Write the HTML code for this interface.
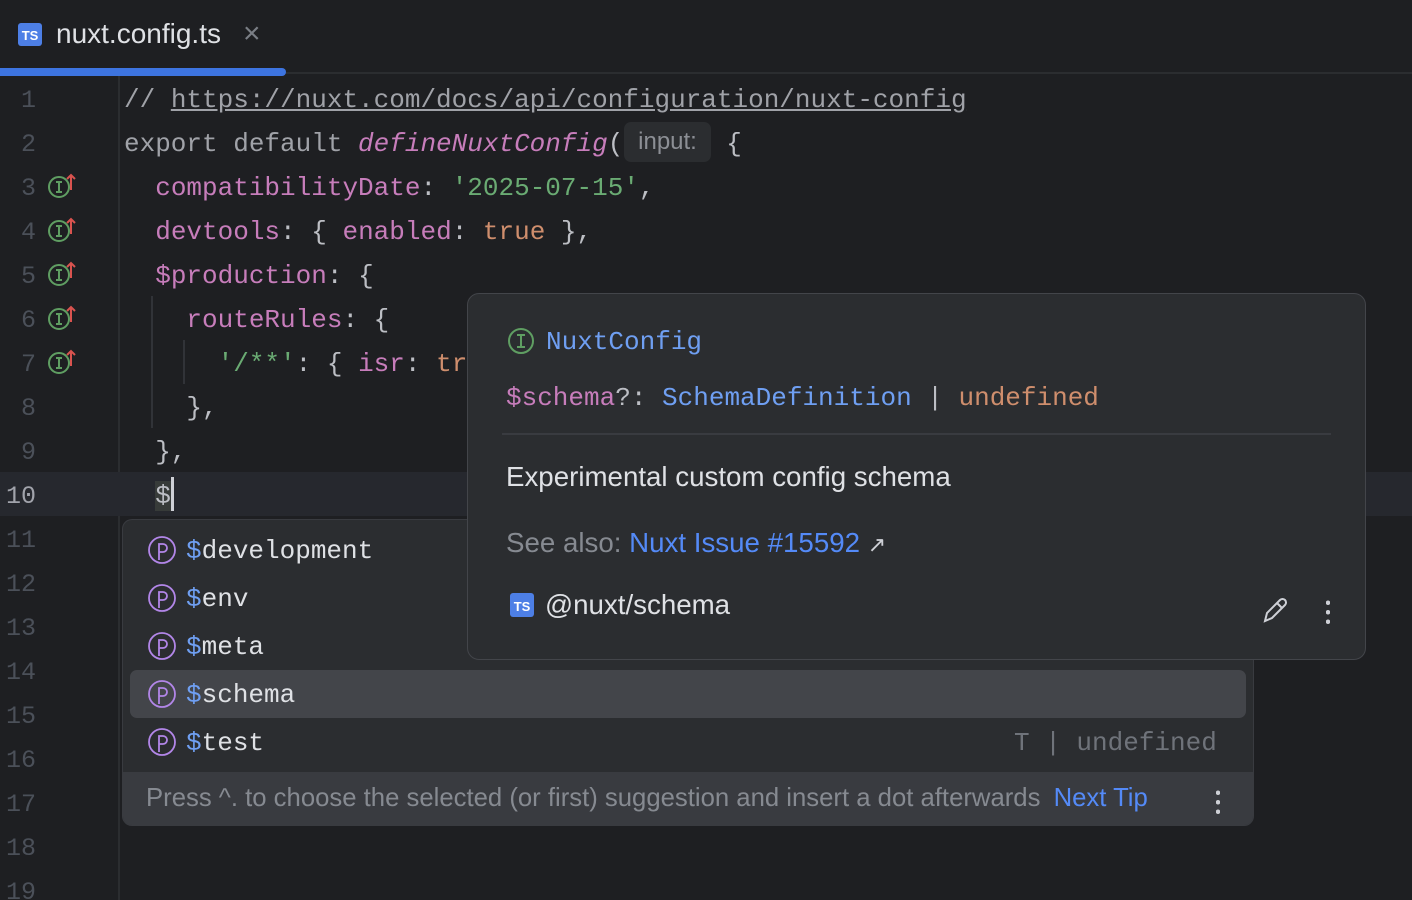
<!DOCTYPE html>
<html><head><meta charset="utf-8"><style>
*{margin:0;padding:0;box-sizing:border-box}
html,body{width:1412px;height:900px;overflow:hidden}
body{background:#1e1f22;position:relative;font-family:"Liberation Sans",sans-serif;color:#bcbec4}
.ln{position:absolute;left:0;width:36px;text-align:right;color:#4b5059;font-family:"Liberation Mono",monospace;font-size:25px;line-height:44px}
.code{position:absolute;left:124px;line-height:44px;white-space:pre;font-family:"Liberation Mono",monospace;font-size:26px;color:#bcbec4}
.p{color:#c77dbb}.s{color:#6aab73}.o{color:#cf8e6d}.k{color:#a0a2a8}.b{color:#6f9ff2}
</style></head><body>
<div style="position:absolute;left:0;top:0;width:1412px;height:74px;background:#1e1f22;border-bottom:2px solid #2b2d30"></div>
<div style="position:absolute;left:18px;top:23px;width:24px;height:23px;background:#4d7fe6;border-radius:3px;color:#fff;font-size:13px;font-weight:bold;text-align:center;line-height:25px">TS</div>
<div style="position:absolute;left:56px;top:18px;font-size:28px;color:#dfe1e5">nuxt.config.ts</div>
<div style="position:absolute;left:243px;top:17px;font-size:30px;color:#7a7e85">×</div>
<div style="position:absolute;left:0;top:68px;width:286px;height:8px;background:#3d74e0;border-radius:0 4px 4px 0"></div>
<div style="position:absolute;left:118px;top:76px;width:2px;height:824px;background:#2b2d30"></div>
<div style="position:absolute;left:0;top:472px;width:1412px;height:44px;background:#26282e"></div>

<div class="ln" style="top:79px">1</div>
<div class="ln" style="top:123px">2</div>
<div class="ln" style="top:167px">3</div>
<div class="ln" style="top:211px">4</div>
<div class="ln" style="top:255px">5</div>
<div class="ln" style="top:299px">6</div>
<div class="ln" style="top:343px">7</div>
<div class="ln" style="top:387px">8</div>
<div class="ln" style="top:431px">9</div>
<div class="ln" style="top:475px;color:#a1a3ab">10</div>
<div class="ln" style="top:519px">11</div>
<div class="ln" style="top:563px">12</div>
<div class="ln" style="top:607px">13</div>
<div class="ln" style="top:651px">14</div>
<div class="ln" style="top:695px">15</div>
<div class="ln" style="top:739px">16</div>
<div class="ln" style="top:783px">17</div>
<div class="ln" style="top:827px">18</div>
<div class="ln" style="top:871px">19</div>

<svg style="position:absolute;left:0;top:0" width="100" height="400">
<g fill="none" stroke-width="2">
<g><circle cx="59" cy="187" r="10" stroke="#5f9e62"/><path d="M56 182h6M59 182v10M56 192h6" stroke="#5f9e62"/><path d="M71 190v-15M67 179l4-4 4 4" stroke="#d9534f"/></g>
<g transform="translate(0,44)"><circle cx="59" cy="187" r="10" stroke="#5f9e62"/><path d="M56 182h6M59 182v10M56 192h6" stroke="#5f9e62"/><path d="M71 190v-15M67 179l4-4 4 4" stroke="#d9534f"/></g>
<g transform="translate(0,88)"><circle cx="59" cy="187" r="10" stroke="#5f9e62"/><path d="M56 182h6M59 182v10M56 192h6" stroke="#5f9e62"/><path d="M71 190v-15M67 179l4-4 4 4" stroke="#d9534f"/></g>
<g transform="translate(0,132)"><circle cx="59" cy="187" r="10" stroke="#5f9e62"/><path d="M56 182h6M59 182v10M56 192h6" stroke="#5f9e62"/><path d="M71 190v-15M67 179l4-4 4 4" stroke="#d9534f"/></g>
<g transform="translate(0,176)"><circle cx="59" cy="187" r="10" stroke="#5f9e62"/><path d="M56 182h6M59 182v10M56 192h6" stroke="#5f9e62"/><path d="M71 190v-15M67 179l4-4 4 4" stroke="#d9534f"/></g>
</g></svg>

<div style="position:absolute;left:151px;top:296px;width:2px;height:132px;background:#313338"></div>
<div style="position:absolute;left:183px;top:340px;width:2px;height:44px;background:#313338"></div>

<div class="code" style="top:78px"><span class="k">// </span><span class="k" style="text-decoration:underline">https://nuxt.com/docs/api/configuration/nuxt-config</span></div>
<div class="code" style="top:122px"><span class="k">export default </span><span class="p" style="font-style:italic">defineNuxtConfig</span>(<span style="display:inline-block;width:103px"></span>{</div>
<div style="position:absolute;left:624px;top:122px;width:87px;height:40px;background:#2b2d30;border-radius:7px;color:#8c8f95;font-size:24px;line-height:40px;text-align:center">input:</div>
<div class="code" style="top:166px">  <span class="p">compatibilityDate</span>: <span class="s">'2025-07-15'</span>,</div>
<div class="code" style="top:210px">  <span class="p">devtools</span>: { <span class="p">enabled</span>: <span class="o">true</span> },</div>
<div class="code" style="top:254px">  <span class="p">$production</span>: {</div>
<div class="code" style="top:298px">    <span class="p">routeRules</span>: {</div>
<div class="code" style="top:342px">      <span class="s">'/**'</span>: { <span class="p">isr</span>: <span class="o">true</span> },</div>
<div class="code" style="top:386px">    },</div>
<div class="code" style="top:430px">  },</div>
<div class="code" style="top:474px">  <span style="background:#373b39">$</span></div>
<div style="position:absolute;left:171px;top:477px;width:3px;height:34px;background:#ced0d6"></div>

<div style="position:absolute;left:122px;top:519px;width:1132px;height:307px;background:#2b2d30;border:1px solid #393b40;border-radius:10px;overflow:hidden">
  <div style="position:absolute;left:7px;top:150px;width:1116px;height:48px;background:#43454a;border-radius:7px"></div>
  <div style="position:absolute;left:0;top:252px;width:1132px;height:56px;background:#393b40"></div>
  <div style="position:absolute;left:23px;top:264px;font-size:25.7px;color:#868a91;white-space:nowrap">Press ^. to choose the selected (or first) suggestion and insert a dot afterwards <span style="color:#548af7;margin-left:6px">Next Tip</span></div>
  <div style="position:absolute;left:1093px;top:268px;width:4px;height:26px;background:radial-gradient(circle,#ced0d6 2px,transparent 2.5px) 0 0/4px 9.5px repeat-y"></div>
</div>
<svg style="position:absolute;left:0;top:0" width="200" height="800" fill="none" stroke="#b286e8" stroke-width="1.8">
<g><circle cx="162" cy="550" r="13"/><path d="M159 560v-16h4a4 4 0 0 1 0 8h-4"/></g>
<g transform="translate(0,48)"><circle cx="162" cy="550" r="13"/><path d="M159 560v-16h4a4 4 0 0 1 0 8h-4"/></g>
<g transform="translate(0,96)"><circle cx="162" cy="550" r="13"/><path d="M159 560v-16h4a4 4 0 0 1 0 8h-4"/></g>
<g transform="translate(0,144)"><circle cx="162" cy="550" r="13"/><path d="M159 560v-16h4a4 4 0 0 1 0 8h-4"/></g>
<g transform="translate(0,192)"><circle cx="162" cy="550" r="13"/><path d="M159 560v-16h4a4 4 0 0 1 0 8h-4"/></g>
</svg>
<div class="code" style="left:186px;top:529px;color:#dfe1e5"><span class="b">$</span>development</div>
<div class="code" style="left:186px;top:577px;color:#dfe1e5"><span class="b">$</span>env</div>
<div class="code" style="left:186px;top:625px;color:#dfe1e5"><span class="b">$</span>meta</div>
<div class="code" style="left:186px;top:673px;color:#dfe1e5"><span class="b">$</span>schema</div>
<div class="code" style="left:186px;top:721px;color:#dfe1e5"><span class="b">$</span>test</div>
<div class="code" style="left:1014px;top:721px;color:#6f737a">T | undefined</div>

<div style="position:absolute;left:467px;top:293px;width:899px;height:367px;background:#2b2d30;border:1px solid #43454a;border-radius:12px">
  <div style="position:absolute;left:34px;top:139px;width:829px;height:2px;background:#393b40"></div>
</div>
<svg style="position:absolute;left:505px;top:325px" width="32" height="32" fill="none" stroke="#5f9e62" stroke-width="2"><circle cx="16" cy="16" r="12"/><path d="M12 10h8M16 10v12M12 22h8"/></svg>
<div class="code" style="left:546px;top:320px;color:#6f9ff2">NuxtConfig</div>
<div class="code" style="left:506px;top:376px"><span class="p">$schema</span>?: <span class="b">SchemaDefinition</span> | <span class="o">undefined</span></div>
<div style="position:absolute;left:506px;top:461px;font-size:27.7px;color:#dfe1e5">Experimental custom config schema</div>
<div style="position:absolute;left:506px;top:527px;font-size:27.7px;color:#868a91">See also: <span style="color:#548af7">Nuxt Issue #15592</span> <span style="color:#ced0d6;font-size:22px">↗</span></div>
<div style="position:absolute;left:510px;top:593px;width:24px;height:24px;background:#4d7fe6;border-radius:3px;color:#fff;font-size:13px;font-weight:bold;text-align:center;line-height:27px">TS</div>
<div style="position:absolute;left:545px;top:589px;font-size:27.7px;color:#dfe1e5">@nuxt/schema</div>
<svg style="position:absolute;left:1260px;top:594px" width="32" height="32" fill="none" stroke="#ced0d6" stroke-width="2"><path d="M5 27l2-8L20 6a3 3 0 0 1 5 5L12 24z M17 9l5 5"/></svg>
<div style="position:absolute;left:1326px;top:598px;width:4px;height:26px;background:radial-gradient(circle,#ced0d6 2px,transparent 2.5px) 0 0/4px 9.5px repeat-y"></div>
</body></html>
